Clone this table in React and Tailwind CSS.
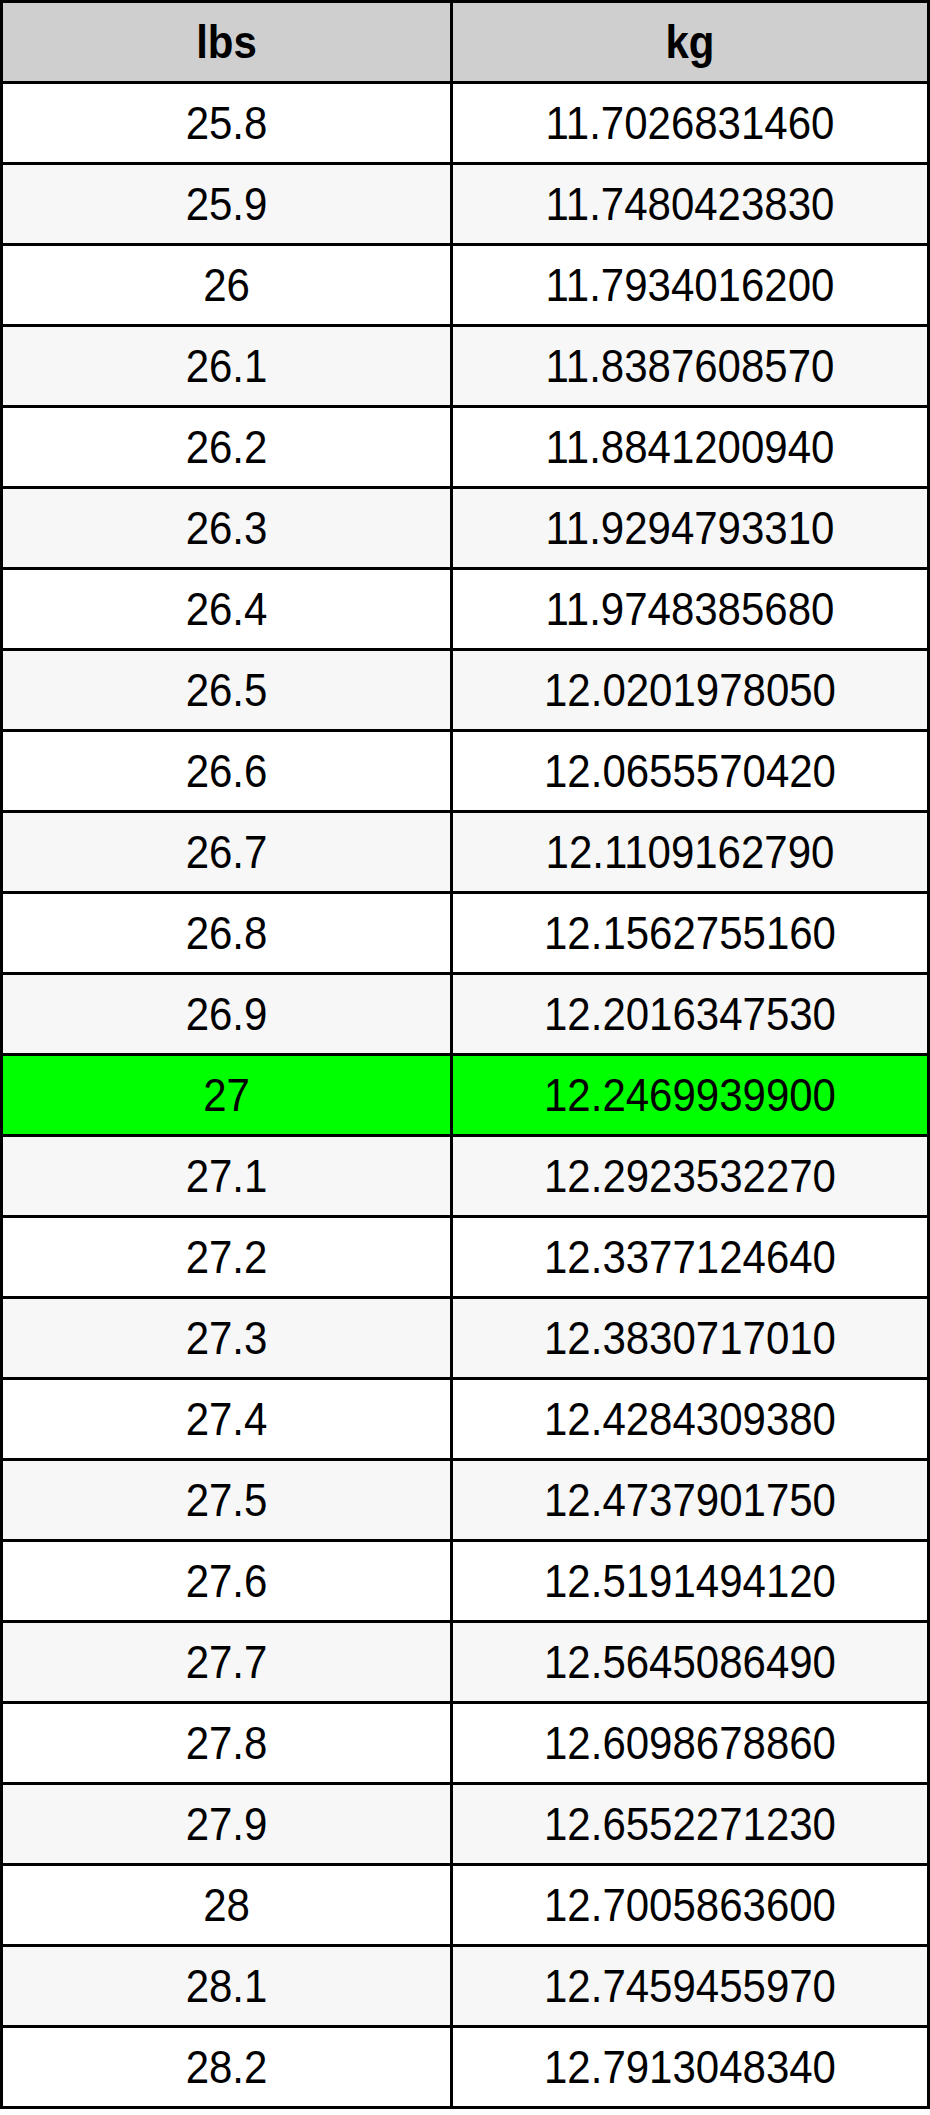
import React from 'react';

const rows = [
  ['25.8', '11.7026831460'],
  ['25.9', '11.7480423830'],
  ['26', '11.7934016200'],
  ['26.1', '11.8387608570'],
  ['26.2', '11.8841200940'],
  ['26.3', '11.9294793310'],
  ['26.4', '11.9748385680'],
  ['26.5', '12.0201978050'],
  ['26.6', '12.0655570420'],
  ['26.7', '12.1109162790'],
  ['26.8', '12.1562755160'],
  ['26.9', '12.2016347530'],
  ['27', '12.2469939900'],
  ['27.1', '12.2923532270'],
  ['27.2', '12.3377124640'],
  ['27.3', '12.3830717010'],
  ['27.4', '12.4284309380'],
  ['27.5', '12.4737901750'],
  ['27.6', '12.5191494120'],
  ['27.7', '12.5645086490'],
  ['27.8', '12.6098678860'],
  ['27.9', '12.6552271230'],
  ['28', '12.7005863600'],
  ['28.1', '12.7459455970'],
  ['28.2', '12.7913048340'],
];

const Row = ({ lbs, kg, bg, bold }) => (
  <div className={`flex h-[81px] ${bg}`}>
    <div className={`w-[450px] flex items-center justify-center border-r-[3px] border-b-[3px] border-black ${bold ? 'font-bold' : ''}`}>
      <span className="inline-block scale-y-[1.12]">{lbs}</span>
    </div>
    <div className={`flex-1 flex items-center justify-center border-r-[3px] border-b-[3px] border-black ${bold ? 'font-bold' : ''}`}>
      <span className="inline-block scale-y-[1.12]">{kg}</span>
    </div>
  </div>
);

export default function App() {
  return (
    <div className="w-[930px] bg-white pb-[6px]">
      <div
        className="border-l-[3px] border-t-[3px] border-black text-black text-[42px] leading-none"
        style={{ fontFamily: '"Liberation Sans", Arial, sans-serif' }}
      >
        <Row lbs="lbs" kg="kg" bg="bg-[#cfcfcf]" bold />
        {rows.map(([lbs, kg], i) => (
          <Row
            key={lbs}
            lbs={lbs}
            kg={kg}
            bg={lbs === '27' ? 'bg-[#00ff00]' : i % 2 === 1 ? 'bg-[#f7f7f7]' : 'bg-white'}
          />
        ))}
      </div>
    </div>
  );
}
